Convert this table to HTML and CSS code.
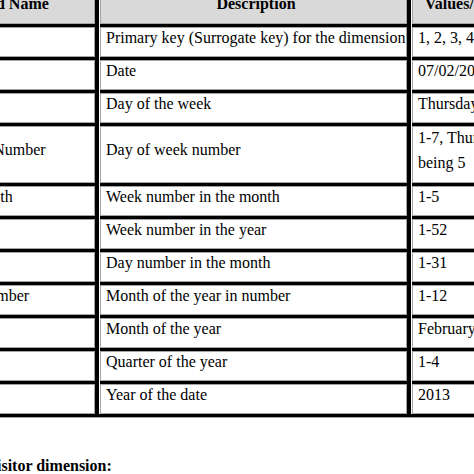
FILE: index.html
```html
<!DOCTYPE html>
<html lang="en">
<head>
<meta charset="utf-8">
<title>Date dimension</title>
<link rel="stylesheet" href="styles.css">
</head>
<body>
<div class="page">
  <div class="dim-table">
    <div class="vline vline-a"></div>
    <div class="vline vline-b"></div>

    <div class="cell head c1">Field Name</div>
    <div class="cell head c2">Description</div>
    <div class="cell head c3">Values/Example</div>

    <div class="cell c1">DateKey</div>
    <div class="cell c2">Primary key (Surrogate key) for the dimension</div>
    <div class="cell c3">1, 2, 3, 4…</div>

    <div class="cell c1">Date</div>
    <div class="cell c2">Date</div>
    <div class="cell c3">07/02/2013</div>

    <div class="cell c1">Weekday</div>
    <div class="cell c2">Day of the week</div>
    <div class="cell c3">Thursday</div>

    <div class="cell c1">Weekday Number</div>
    <div class="cell c2">Day of week number</div>
    <div class="cell c3 multi">1-7, Thursday being 5</div>

    <div class="cell c1">Week Month</div>
    <div class="cell c2">Week number in the month</div>
    <div class="cell c3">1-5</div>

    <div class="cell c1">Week</div>
    <div class="cell c2">Week number in the year</div>
    <div class="cell c3">1-52</div>

    <div class="cell c1">Day</div>
    <div class="cell c2">Day number in the month</div>
    <div class="cell c3">1-31</div>

    <div class="cell c1">Month Number</div>
    <div class="cell c2">Month of the year in number</div>
    <div class="cell c3">1-12</div>

    <div class="cell c1">Month</div>
    <div class="cell c2">Month of the year</div>
    <div class="cell c3">February</div>

    <div class="cell c1">Quarter</div>
    <div class="cell c2">Quarter of the year</div>
    <div class="cell c3">1-4</div>

    <div class="cell c1">Year</div>
    <div class="cell c2">Year of the date</div>
    <div class="cell c3">2013</div>
  </div>

  <p class="caption">Visitor dimension:</p>
</div>
</body>
</html>
```

FILE: styles.css
```css
html, body {
  margin: 0;
  padding: 0;
  background: #ffffff;
}

body {
  width: 474px;
  height: 474px;
  overflow: hidden;
  font-family: "Liberation Serif", "Times New Roman", serif;
  font-size: 16px;
  color: #000000;
}

.page {
  width: 700px;
}

.dim-table {
  display: grid;
  grid-template-columns: 171px 4px 1px 307px 4px 1px 140px;
  grid-template-rows: 31px repeat(3, 30px) 57px repeat(7, 30px);
  row-gap: 3px;
  column-gap: 0;
  background: #000000;
  border: 1px solid #a4a4a4;
  padding: 3px;
  margin: -11px 0 0 -80px;
  width: max-content;
}

.vline {
  grid-row: 1 / -1;
  background: #ffffff;
}

.vline-a { grid-column: 3; }
.vline-b { grid-column: 6; }

.cell {
  display: flex;
  align-items: center;
  background: #ffffff;
  border: 1px solid #a4a4a4;
  padding: 0 5px 9px;
  line-height: 20px;
  min-width: 0;
}

.c1 {
  grid-column: 1;
  white-space: nowrap;
}

.c2 {
  grid-column: 4;
  white-space: nowrap;
  padding-right: 0;
}

.c3 {
  grid-column: 7;
  padding-right: 10px;
}

.head {
  background: #d9d9d9;
  font-weight: bold;
  justify-content: center;
  text-align: center;
  white-space: nowrap;
}

.multi {
  line-height: 25px;
}

.caption {
  margin: 38px 0 0 -14px;
  font-weight: bold;
  line-height: 20px;
  white-space: nowrap;
}
```
